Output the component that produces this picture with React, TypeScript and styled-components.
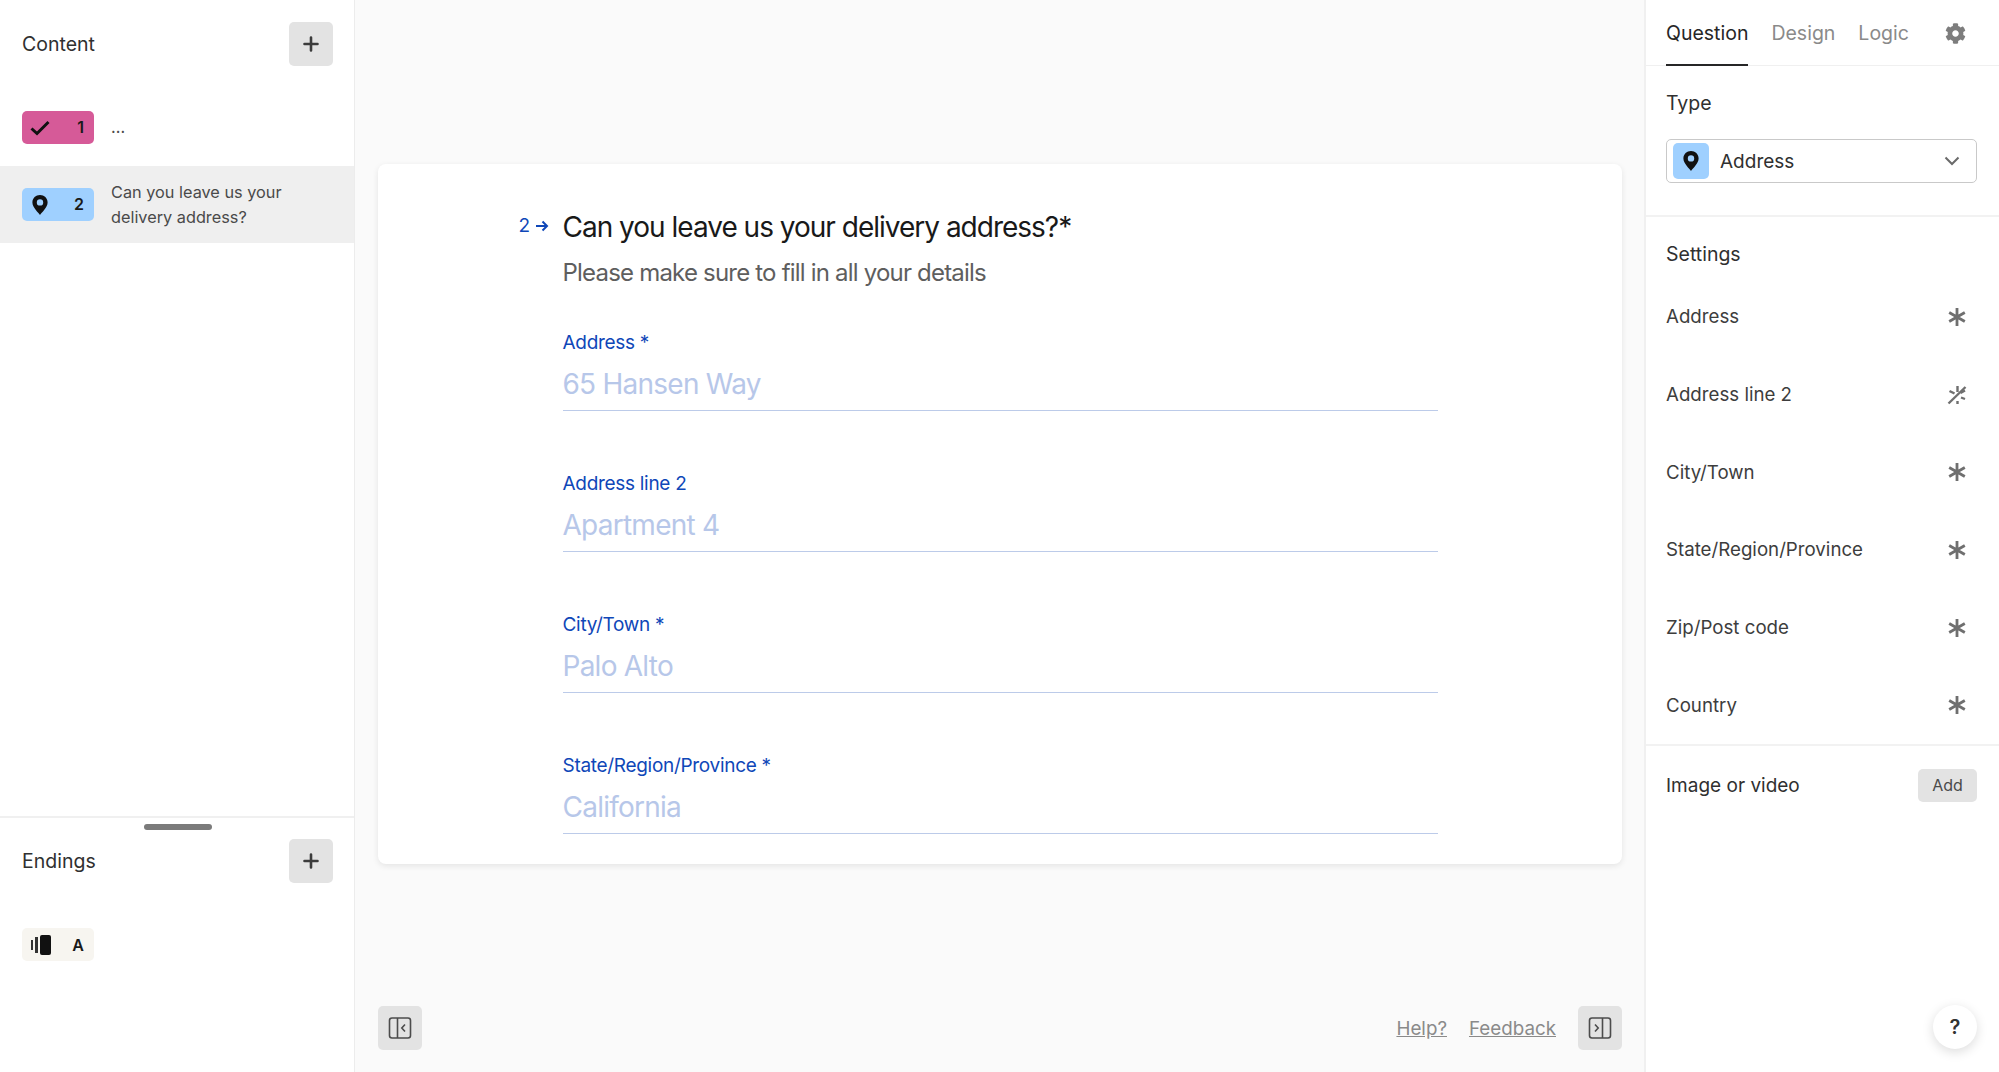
import styled, { createGlobalStyle } from "styled-components";
import { FaCog } from "react-icons/fa";

const GlobalStyle = createGlobalStyle`
	html, body {
		margin: 0;
		padding: 0;
		height: 100%;
		overflow: hidden;
	}
	body {
		font-family: Inter, "Liberation Sans", sans-serif;
		color: #262627;
		background: #fafafa;
	}
	* {
		box-sizing: border-box;
	}
`;

const Page = styled.div`
	display: grid;
	grid-template-columns: 355px 1fr 355px;
	height: 1072px;
	overflow: hidden;
`;

const Sidebar = styled.aside`
	display: flex;
	flex-direction: column;
	background: #ffffff;
	border-right: 1px solid #ececec;
`;

const SidebarSection = styled.div`
	flex: 1;
`;

const SidebarHeader = styled.div`
	display: flex;
	align-items: center;
	justify-content: space-between;
	height: 44px;
	margin-top: 22px;
	padding: 0 21px 0 22px;
	font-size: 19.5px;
	color: #303030;
`;

const QuestionList = styled.div`
	display: flex;
	flex-direction: column;
	margin-top: 23px;
`;

const QuestionRow = styled.div<{ $selected?: boolean }>`
	display: flex;
	align-items: center;
	gap: 17px;
	height: 77px;
	padding: 0 22px;
	background: ${(p) => (p.$selected ? "#efefef" : "transparent")};
	font-size: 16.3px;
	line-height: 25px;
	color: #4a4a4a;
`;

const Badge = styled.div<{ $color: string }>`
	display: flex;
	align-items: center;
	justify-content: space-between;
	flex: none;
	width: 72px;
	height: 33px;
	padding: 0 10px 0 8px;
	border-radius: 5px;
	background: ${(p) => p.$color};
	font-size: 16px;
	font-weight: 600;
	color: #191919;
`;

const Endings = styled.div`
	position: relative;
	flex: none;
	height: 256px;
	border-top: 2px solid #f0f0f0;
`;

const DragHandle = styled.div`
	position: absolute;
	top: 6px;
	left: 144px;
	width: 68px;
	height: 6px;
	border-radius: 3px;
	background: #7b7b7b;
`;

const EndingHeader = styled(SidebarHeader)`
	margin-top: 21px;
`;

const EndingRow = styled.div`
	margin-top: 45px;
	padding: 0 22px;
`;

const GreyButton = styled.button`
	display: flex;
	align-items: center;
	justify-content: center;
	width: 44px;
	height: 44px;
	padding: 0;
	border: 0;
	border-radius: 5px;
	background: #e3e3e3;
	color: #3c3c3c;
`;

const Main = styled.main`
	display: flex;
	flex-direction: column;
	padding: 164px 22px 22px 23px;
	min-width: 0;
`;

const Card = styled.section`
	flex: none;
	height: 700px;
	overflow: hidden;
	padding-top: 45px;
	border-radius: 8px;
	background: #ffffff;
	box-shadow: 0 2px 6px rgba(0, 0, 0, 0.09);
`;

const FormColumn = styled.div`
	width: 875px;
	margin: 0 auto;
`;

const QuestionTitle = styled.div`
	display: flex;
	align-items: center;
	height: 36px;
	margin-left: -44px;
	font-size: 28px;
	letter-spacing: -1px;
	color: #191919;
`;

const QuestionNumber = styled.span`
	display: flex;
	align-items: center;
	gap: 5px;
	width: 44px;
	padding: 0 0 3px 0;
	font-size: 19px;
	letter-spacing: 0;
	color: #0f47b8;
`;

const QuestionHint = styled.div`
	margin-top: 12px;
	height: 32px;
	font-size: 24px;
	line-height: 32px;
	letter-spacing: -0.8px;
	color: #5e5e5e;
`;

const Field = styled.div`
	display: flex;
	flex-direction: column;
	height: 141px;
`;

const FirstFields = styled.div`
	margin-top: 42px;
`;

const FieldLabel = styled.label`
	height: 24px;
	font-size: 19px;
	line-height: 24px;
	letter-spacing: -0.3px;
	color: #0f47b8;
`;

const FieldValue = styled.div`
	height: 56px;
	padding-top: 11px;
	border-bottom: 1px solid #bccbe9;
	font-size: 28px;
	line-height: 36px;
	letter-spacing: -0.75px;
	color: #b7c7e9;
`;

const Footer = styled.div`
	display: flex;
	align-items: center;
	justify-content: space-between;
	margin-top: auto;
`;

const FooterLinks = styled.div`
	display: flex;
	align-items: center;
	gap: 22px;
`;

const FooterLink = styled.a`
	font-size: 18.8px;
	color: #8a8a8a;
	text-decoration: underline;
`;

const Panel = styled.aside`
	position: relative;
	display: flex;
	flex-direction: column;
	background: #ffffff;
	border-left: 2px solid #f0f0f0;
`;

const Tabs = styled.div`
	display: flex;
	align-items: flex-start;
	gap: 23px;
	height: 66px;
	padding: 21px 33px 0 20px;
	border-bottom: 1px solid #f0f0f0;
`;

const Tab = styled.div<{ $active?: boolean }>`
	height: 45px;
	font-size: 19.5px;
	line-height: 24px;
	color: ${(p) => (p.$active ? "#262627" : "#8a8a8a")};
	border-bottom: 2px solid ${(p) => (p.$active ? "#262627" : "transparent")};
`;

const GearIcon = styled(FaCog)`
	margin: 2px 0 0 auto;
	width: 21px;
	height: 21px;
	color: #7d7d7d;
`;

const PanelSection = styled.div`
	padding: 0 22px 0 20px;
	border-bottom: 2px solid #f2f2f2;
`;

const TypeSection = styled(PanelSection)`
	height: 151px;
	padding-top: 25px;
`;

const SectionTitle = styled.div`
	font-size: 19.5px;
	line-height: 24px;
	color: #303030;
`;

const TypeSelect = styled.div`
	display: flex;
	align-items: center;
	gap: 11px;
	height: 44px;
	margin-top: 24px;
	padding: 0 16px 0 6px;
	border: 1.5px solid #c9c9c9;
	border-radius: 5px;
	font-size: 19px;
	color: #303030;
`;

const TypeIcon = styled.div`
	display: flex;
	align-items: center;
	justify-content: center;
	width: 36px;
	height: 36px;
	border-radius: 5px;
	background: #9fd0ff;
`;

const Chevron = styled.svg`
	margin-left: auto;
`;

const SettingsSection = styled(PanelSection)`
	height: 529px;
	padding-top: 25px;
`;

const SettingsRows = styled.div`
	display: flex;
	flex-direction: column;
	margin-top: 12px;
`;

const SettingRow = styled.div`
	display: flex;
	align-items: center;
	justify-content: space-between;
	height: 77.7px;
	padding-right: 10px;
	font-size: 18.7px;
	color: #3d3d3d;
`;

const MediaRow = styled.div`
	display: flex;
	align-items: center;
	justify-content: space-between;
	height: 78px;
	padding: 0 22px 0 20px;
	font-size: 19px;
	color: #303030;
`;

const AddButton = styled.button`
	width: 59px;
	height: 33px;
	padding: 0;
	border: 0;
	border-radius: 5px;
	background: #e3e3e3;
	font-family: inherit;
	font-size: 16px;
	color: #4a4a4a;
`;

const HelpBubble = styled.div`
	position: absolute;
	right: 22px;
	bottom: 23px;
	display: flex;
	align-items: center;
	justify-content: center;
	width: 44px;
	height: 44px;
	border-radius: 50%;
	background: #ffffff;
	box-shadow: 0 3px 12px rgba(0, 0, 0, 0.14);
	font-size: 20px;
	font-weight: 600;
	color: #333333;
`;

const PinIcon = () => (
	<svg width="20" height="22" viewBox="0 0 20 22" fill="none">
		<path
			fillRule="evenodd"
			d="M10 21 C8.6 18.6 2.4 13.5 2.4 8.4 C2.4 4.2 5.8 1 10 1 C14.2 1 17.6 4.2 17.6 8.4 C17.6 13.5 11.4 18.6 10 21 Z M10 5.2 A3.2 3.2 0 1 0 10 11.6 A3.2 3.2 0 1 0 10 5.2 Z"
			fill="#111111"
		/>
	</svg>
);

const CheckIcon = () => (
	<svg width="20" height="16" viewBox="0 0 20 16" fill="none">
		<path d="M1.5 8.5 L7 13.5 L18.5 2" stroke="#111111" strokeWidth="3" />
	</svg>
);

const PlusIcon = () => (
	<svg width="16" height="16" viewBox="0 0 16 16" fill="none">
		<path d="M8 1.5 V14.5 M1.5 8 H14.5" stroke="#3c3c3c" strokeWidth="2.6" strokeLinecap="round" />
	</svg>
);

const EndingIcon = () => (
	<svg width="22" height="22" viewBox="0 0 22 22" fill="none">
		<rect x="1" y="6" width="2" height="10" fill="#333333" />
		<rect x="5" y="3" width="3" height="16" fill="#333333" />
		<rect x="10" y="1" width="11" height="20" rx="2" fill="#111111" />
	</svg>
);

const CollapseIcon = ({ flip }: { flip?: boolean }) => (
	<svg
		width="24"
		height="24"
		viewBox="0 0 24 24"
		fill="none"
		style={flip ? { transform: "scaleX(-1)" } : undefined}
	>
		<rect x="1.5" y="2" width="21" height="20" rx="2.5" stroke="#4c4c4c" strokeWidth="1.6" />
		<path d="M9.5 2 V22" stroke="#4c4c4c" strokeWidth="1.6" />
		<path d="M17 8.5 L13.8 12 L17 15.5" stroke="#4c4c4c" strokeWidth="1.6" />
	</svg>
);

const AsteriskIcon = ({ off }: { off?: boolean }) => (
	<svg width="20" height="20" viewBox="0 0 20 20" fill="none">
		{off ? (
			<>
				<path d="M10.5 1 V7 M2.5 6 L7.5 8.5 M18 5.5 L13.5 8 M10.5 16 V19 M14 12.5 L18 14" stroke="#6f6f6f" strokeWidth="2.4" />
				<path d="M1.5 18.5 L18.5 2" stroke="#6f6f6f" strokeWidth="2.4" />
			</>
		) : (
			<path d="M10 1 V19 M2.2 5.5 L17.8 14.5 M17.8 5.5 L2.2 14.5" stroke="#6f6f6f" strokeWidth="2.8" />
		)}
	</svg>
);

const ArrowIcon = () => (
	<svg width="14" height="12" viewBox="0 0 14 12" fill="none">
		<path d="M1 6 H12 M7.5 1.5 L12 6 L7.5 10.5" stroke="#0f47b8" strokeWidth="2" />
	</svg>
);

const fields = [
	{ label: "Address *", value: "65 Hansen Way" },
	{ label: "Address line 2", value: "Apartment 4" },
	{ label: "City/Town *", value: "Palo Alto" },
	{ label: "State/Region/Province *", value: "California" },
];

const settings = [
	"Address",
	"Address line 2",
	"City/Town",
	"State/Region/Province",
	"Zip/Post code",
	"Country",
];

export default function App() {
	return (
		<>
			<GlobalStyle />
			<Page>
				<Sidebar>
					<SidebarSection>
						<SidebarHeader>
							Content
							<GreyButton>
								<PlusIcon />
							</GreyButton>
						</SidebarHeader>
						<QuestionList>
							<QuestionRow>
								<Badge $color="#d65a98">
									<CheckIcon />1
								</Badge>
								...
							</QuestionRow>
							<QuestionRow $selected>
								<Badge $color="#9fd0ff">
									<PinIcon />2
								</Badge>
								<span>
									Can you leave us your
									<br />
									delivery address?
								</span>
							</QuestionRow>
						</QuestionList>
					</SidebarSection>
					<Endings>
						<DragHandle />
						<EndingHeader>
							Endings
							<GreyButton>
								<PlusIcon />
							</GreyButton>
						</EndingHeader>
						<EndingRow>
							<Badge $color="#f7f5f0">
								<EndingIcon />A
							</Badge>
						</EndingRow>
					</Endings>
				</Sidebar>
				<Main>
					<Card>
						<FormColumn>
							<QuestionTitle>
								<QuestionNumber>
									2<ArrowIcon />
								</QuestionNumber>
								Can you leave us your delivery address?*
							</QuestionTitle>
							<QuestionHint>Please make sure to fill in all your details</QuestionHint>
							<FirstFields>
								{fields.map((f) => (
									<Field key={f.label}>
										<FieldLabel>{f.label}</FieldLabel>
										<FieldValue>{f.value}</FieldValue>
									</Field>
								))}
							</FirstFields>
						</FormColumn>
					</Card>
					<Footer>
						<GreyButton>
							<CollapseIcon />
						</GreyButton>
						<FooterLinks>
							<FooterLink>Help?</FooterLink>
							<FooterLink>Feedback</FooterLink>
							<GreyButton>
								<CollapseIcon flip />
							</GreyButton>
						</FooterLinks>
					</Footer>
				</Main>
				<Panel>
					<Tabs>
						<Tab $active>Question</Tab>
						<Tab>Design</Tab>
						<Tab>Logic</Tab>
						<GearIcon />
					</Tabs>
					<TypeSection>
						<SectionTitle>Type</SectionTitle>
						<TypeSelect>
							<TypeIcon>
								<PinIcon />
							</TypeIcon>
							Address
							<Chevron width="16" height="10" viewBox="0 0 16 10" fill="none">
								<path d="M1.5 1.5 L8 8 L14.5 1.5" stroke="#6a6a6a" strokeWidth="2" />
							</Chevron>
						</TypeSelect>
					</TypeSection>
					<SettingsSection>
						<SectionTitle>Settings</SectionTitle>
						<SettingsRows>
							{settings.map((s) => (
								<SettingRow key={s}>
									{s}
									<AsteriskIcon off={s === "Address line 2"} />
								</SettingRow>
							))}
						</SettingsRows>
					</SettingsSection>
					<MediaRow>
						Image or video
						<AddButton>Add</AddButton>
					</MediaRow>
					<HelpBubble>?</HelpBubble>
				</Panel>
			</Page>
		</>
	);
}
